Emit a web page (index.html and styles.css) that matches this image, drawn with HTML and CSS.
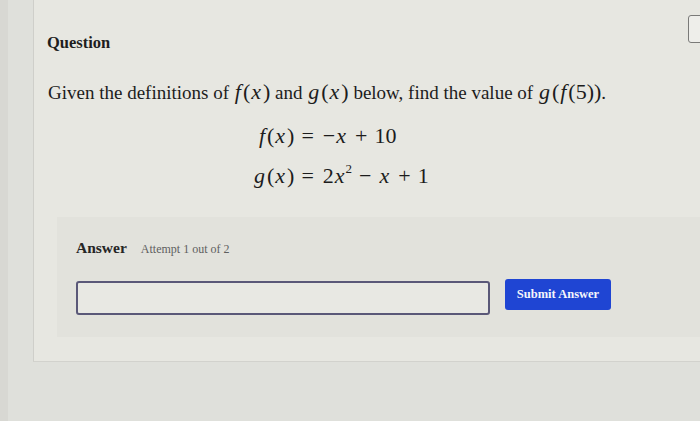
FILE: index.html
```html
<!DOCTYPE html>
<html>
<head>
<meta charset="utf-8">
<link rel="stylesheet" href="styles.css">
</head>
<body>
<div class="strip">
  <div class="frame">
    <div class="card">
      <h2 class="title">Question</h2>
      <p class="prompt">Given the definitions of <span class="m"><i>f</i>(<i>x</i>)</span> and <span class="m"><i>g</i>(<i>x</i>)</span> below, find the value of <span class="m"><i>g</i>(<i>f</i>(5))</span>.</p>
      <div class="eqs">
        <div class="lhs m"><i>f</i>(<i>x</i>)</div>
        <div class="rhs m"><span class="rel">=</span>−<i>x</i><span class="bin">+</span>10</div>
        <div class="lhs m"><i>g</i>(<i>x</i>)</div>
        <div class="rhs m"><span class="rel">=</span>2<i>x</i><sup>2</sup><span class="bin">−</span><i>x</i><span class="bin">+</span>1</div>
      </div>
      <div class="answer">
        <div class="answer-head">
          <span class="answer-label">Answer</span>
          <span class="attempt">Attempt 1 out of 2</span>
        </div>
        <div class="answer-row">
          <div class="input"></div>
          <button class="submit">Submit Answer</button>
        </div>
      </div>
    </div>
  </div>
</div>
<div class="corner-box"></div>
</body>
</html>
```
FILE: styles.css
```css
html, body {
  margin: 0;
  padding: 0;
}
body {
  width: 700px;
  height: 421px;
  overflow: hidden;
  background: #d8d8d3;
  font-family: "Liberation Serif", "Times New Roman", serif;
  color: #1e1e1e;
  position: relative;
}
.strip {
  height: 421px;
  padding-left: 8px;
}
.frame {
  height: 421px;
  background: #dfe0db;
  padding-left: 25px;
}
.card {
  height: 362px;
  box-sizing: border-box;
  background: #e7e7e1;
  border-left: 1px solid #cfcfca;
  border-bottom: 1px solid #d2d2cd;
  padding-top: 33px;
}
.title {
  margin: 0 0 0 13px;
  font-size: 16.5px;
  line-height: 20px;
  font-weight: bold;
  color: #1e1e1e;
}
.prompt {
  margin: 26px 0 0 14px;
  font-size: 19px;
  line-height: 26px;
  color: #1c1c1c;
}
.m {
  font-family: "Liberation Serif", "Times New Roman", serif;
  font-size: 22px;
}
.m i {
  font-style: italic;
  padding: 0 2px 0 1px;
}
.eqs {
  display: grid;
  grid-template-columns: auto auto;
  justify-content: start;
  margin: 16px 0 0 219px;
  row-gap: 12px;
  line-height: 28px;
  color: #1c1c1c;
}
.lhs {
  text-align: right;
}
.rel {
  margin: 0 9px 0 7px;
}
.bin {
  margin: 0 7px;
}
.rhs sup {
  font-size: 13px;
  line-height: 0;
  vertical-align: 10px;
  margin-left: -1px;
}
.answer {
  margin: 27px 0 0 23px;
  height: 120px;
  box-sizing: border-box;
  background: #e2e2dc;
  padding: 22px 0 0 19px;
}
.answer-head {
  display: flex;
  align-items: baseline;
  gap: 14px;
}
.answer-label {
  font-size: 15.5px;
  font-weight: bold;
  color: #262626;
}
.attempt {
  font-size: 12px;
  color: #5f5f5f;
}
.answer-row {
  display: flex;
  align-items: flex-start;
  gap: 15px;
  margin-top: 22px;
}
.input {
  width: 414px;
  height: 34px;
  box-sizing: border-box;
  border: 2px solid #5a5878;
  border-radius: 3px;
  background: #e8e8e3;
  margin-top: 2px;
}
.submit {
  width: 106px;
  height: 31px;
  border: none;
  border-radius: 3px;
  background: #1f45d3;
  color: #f4f5fb;
  font-family: "Liberation Serif", "Times New Roman", serif;
  font-weight: bold;
  font-size: 12.5px;
  padding: 0;
}
.corner-box {
  position: absolute;
  left: 688px;
  top: 15px;
  width: 24px;
  height: 28px;
  box-sizing: border-box;
  border: 1.5px solid #7a7a78;
  border-radius: 3px;
  background: #eeeeea;
}
```
